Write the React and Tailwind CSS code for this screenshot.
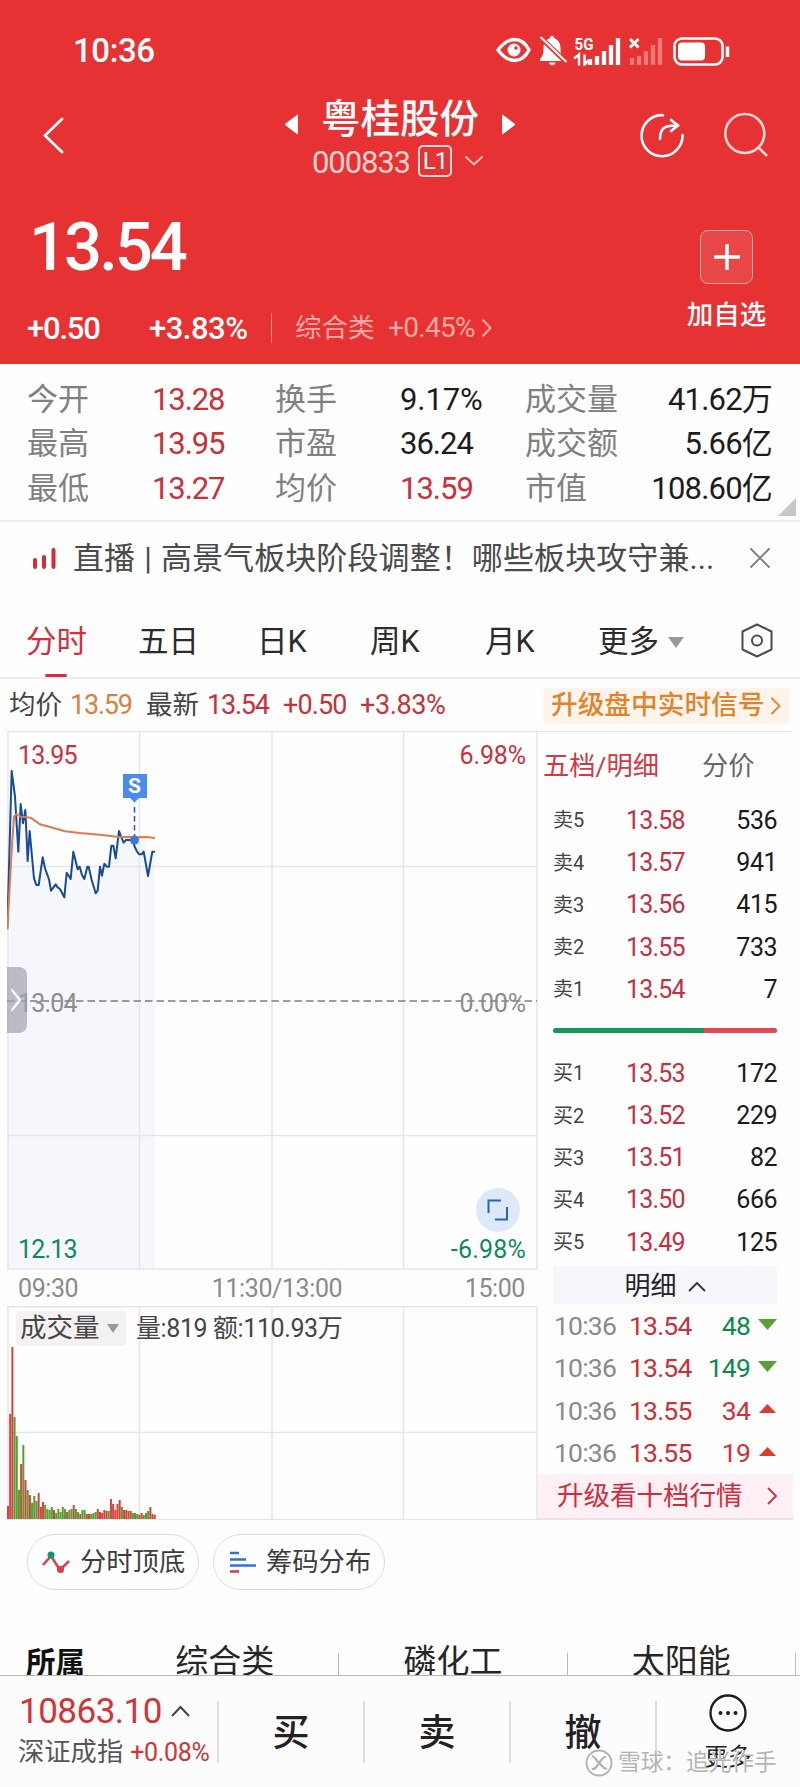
import React from 'react';

// 五档盘口
const sells = [
  { label: '卖5', price: '13.58', count: 536 },
  { label: '卖4', price: '13.57', count: 941 },
  { label: '卖3', price: '13.56', count: 415 },
  { label: '卖2', price: '13.55', count: 733 },
  { label: '卖1', price: '13.54', count: 7 },
];

const buys = [
  { label: '买1', price: '13.53', count: 172 },
  { label: '买2', price: '13.52', count: 229 },
  { label: '买3', price: '13.51', count: 82 },
  { label: '买4', price: '13.50', count: 666 },
  { label: '买5', price: '13.49', count: 125 },
];

const ticks = [
  { time: '10:36', price: '13.54', count: 48, up: false },
  { time: '10:36', price: '13.54', count: 149, up: false },
  { time: '10:36', price: '13.55', count: 34, up: true },
  { time: '10:36', price: '13.55', count: 19, up: true },
];

const stats = [
  ['今开', '13.28', '换手', '9.17%', '成交量', '41.62万'],
  ['最高', '13.95', '市盈', '36.24', '成交额', '5.66亿'],
  ['最低', '13.27', '均价', '13.59', '市值', '108.60亿'],
];

// 分时价格线、均价线
const pricePoints =
  '22,775 35,303 45,380 55,545 62,402 69,460 76,420 83,573 89,483 102,625 109,645 116,645 128,562 135,595 147,628 153,662 167,643 173,652 180,657 193,682 200,608 212,627 220,545 233,598 239,590 246,615 253,627 262,590 266,590 275,630 287,670 293,662 300,590 306,617 313,581 320,590 327,590 334,527 340,527 347,565 357,483 363,500 371,518 378,510 385,510 398,510 404,530 411,545 418,553 425,553 431,545 444,618 457,545 465,545';
const avgPoints =
  '22,778 35,540 42,440 50,432 62,440 92,443 120,463 150,471 195,484 240,489 300,494 350,500 400,502 440,501 465,504';

// 成交量柱: r 涨, g 跌
const volumes =
  'r13 r105 r172 g102 g83 g29 r55 g74 r39 g29 r24 g16 g23 g18 r26 r12 r17 g14 g10 g9 g12 r9 g6 g10 g7 g12 g10 r7 g9 g10 r14 g10 g7 r5 g9 g9 r5 r5 g5 g6 g7 r10 r7 r6 r9 r8 g8 r20 r15 r9 r15 r19 g12 r9 r9 r8 r8 g6 g6 g5 r4 r6 g4 g6 g8 r12 r5 r4'.split(' ');

const StatusBar = () => (
  <div className="flex h-[100px] items-center pl-[73px] pr-[68px]">
    <span className="flex-1 pt-px text-[33px] font-medium tracking-[-0.4px]">10:36</span>
    <svg width="236" height="32" viewBox="0 0 236 32" fill="none">
      <path d="M2 16C8 8 13 5.500 18.500 5.500S29 8 33 16C29 24 24 26.500 18.500 26.500S8 24 2 16Z" stroke="white" strokeWidth="3.400" />
      <circle cx="18" cy="16" r="6.500" fill="white" />
      <circle cx="20" cy="14" r="1.800" fill="#e63232" />
      <path d="M44 27v-2c3-3 3.500-6 3.500-11 0-5 2.500-8.500 6.500-10 0-3 4-3 4 0 4 1.500 6.500 5 6.500 10 0 5 .5 8 4 11v2ZM53 28.500h6.500c-1 3.500-5.500 3.500-6.500 0Z" fill="white" />
      <path d="m43 2 28 27" stroke="#e63232" strokeWidth="5" />
      <path d="m44.500 3 26 25" stroke="white" strokeWidth="2" />
      <text x="78.500" y="15.500" fill="white" fontSize="17" fontWeight="700" fontFamily="Roboto" textLength="19" lengthAdjust="spacingAndGlyphs">5G</text>
      <path d="M78 24.500l5-4v11M88.500 20.500v10l4-4" stroke="white" strokeWidth="2.500" />
      <path d="M94 31v-6M101 31v-9M108 31v-14M115 31V11M122 31V4" stroke="white" strokeWidth="4.300" />
      <path d="m134 5 8.500 8.500m0-8.500-8.500 8.500" stroke="white" strokeWidth="3" />
      <path d="M136 31v-7M143 31v-9M150 31v-14M157 31V11M164 31V4" stroke="white" strokeOpacity=".35" strokeWidth="4.300" />
      <rect x="178.500" y="4.500" width="48" height="26" rx="7.500" stroke="white" strokeWidth="2.600" />
      <rect x="182" y="8.500" width="27" height="18" rx="4" fill="white" />
      <path d="M231.500 12.500v10.500" stroke="white" strokeWidth="3.500" />
    </svg>
  </div>
);

const TitleBar = () => (
  <div className="flex h-[94px] pl-[43px] pr-[32px]">
    <svg className="mt-[17px]" width="22" height="37" viewBox="0 0 22 37" fill="none">
      <path d="M19 2 2 18.500 19 35" stroke="white" strokeWidth="2.800" strokeLinecap="round" />
    </svg>
    <div className="ml-[219px] w-[232px]">
      <div className="flex h-[42px] items-center justify-between pt-[3px]">
        <svg className="mt-[4px]" width="15" height="21" viewBox="0 0 15 21"><path d="M13.500 1v19L1 10.500Z" fill="white" stroke="white" strokeLinejoin="round" /></svg>
        <span className="-mt-[5px] text-[39.500px] font-medium">粤桂股份</span>
        <svg className="mt-[4px]" width="15" height="21" viewBox="0 0 15 21"><path d="M1.500 1v19L14 10.500Z" fill="white" stroke="white" strokeLinejoin="round" /></svg>
      </div>
      <div className="mt-[3px] flex h-[32px] items-center pl-[28px]">
        <span className="w-[106px] pt-[3px] text-[31px] tracking-[-1.1px] text-[#ffd3d0]">000833</span>
        <span className="flex h-[32px] w-[34px] items-center justify-center rounded-[5px] border-2 border-[#ffdcda] text-[24px] tracking-[-1px]">L1</span>
        <svg className="ml-[12px]" width="20" height="12" viewBox="0 0 20 12" fill="none">
          <path d="m1.500 1.500 8.500 8 8.500-8" stroke="#ffc4c0" strokeWidth="2" />
        </svg>
      </div>
    </div>
    <svg className="ml-[124px] mt-[13px]" width="44" height="45" viewBox="0 0 44 45" fill="none" stroke="white" strokeWidth="2.600" strokeLinecap="round">
      <path d="M23 2.200A20.500 20.500 0 1 0 42.500 22" />
      <path d="M20 26c0-10 4-13.500 15-13.500M31 7l7 5.500-7 5.500" />
    </svg>
    <svg className="ml-[40px] mt-[12px]" width="44" height="46" viewBox="0 0 44 46" fill="none" stroke="#ffd8d6" strokeWidth="2.600">
      <circle cx="20.800" cy="21.500" r="19.500" />
      <path d="m35 36 8 8" />
    </svg>
  </div>
);

const Quote = () => (
  <div className="flex h-[170px]">
    <div className="w-[640px] pl-[27px]">
      <div className="flex h-[104px] items-center pl-[2px] pt-[3px] text-[67px] font-medium tracking-[-3px]">13.54</div>
      <div className="flex h-[60px] items-center text-[31px]">
        <span className="w-[122px] pt-px font-medium tracking-[-1.2px]">+0.50</span>
        <span className="w-[122px] pt-px font-medium tracking-[-0.5px]">+3.83%</span>
        <span className="h-[30px] w-px bg-[#ff9a97]" />
        <span className="ml-[23px] w-[93px] text-[26.500px] text-[#ffaaa6]">综合类</span>
        <span className="w-[93px] text-[28px] tracking-[-0.7px] text-[#ffaaa6]">+0.45%</span>
        <svg width="11" height="20" viewBox="0 0 11 20" fill="none"><path d="m1.500 1.500 8 8.500-8 8.500" stroke="#ffaaa6" strokeWidth="2" /></svg>
      </div>
    </div>
    <div className="flex flex-1 flex-col items-center pl-[13px] pt-[36px]">
      <div className="flex h-[54px] w-[53px] shrink-0 items-center justify-center rounded-[8px] border border-[#ffa3a1] bg-white/10">
        <svg width="28" height="28" viewBox="0 0 28 28"><path d="M14 1v26M1 14h26" stroke="white" strokeWidth="3.500" /></svg>
      </div>
      <span className="mt-[18px] text-[26.500px] font-medium">加自选</span>
    </div>
  </div>
);

const Stats = () => (
  <div className="relative h-[158px] border-b-2 border-[#ececee] pl-[27px] pr-[28px] pt-[13px] text-[31px]">
    {stats.map((row, i) => (
      <div key={i} className="flex h-[44.500px] items-center">
        <span className="w-[125px] text-[31px] text-[#808080]">{row[0]}</span>
        <span className="w-[123px] tracking-[-1.1px] text-[#c9303a]">{row[1]}</span>
        <span className="w-[125px] text-[31px] text-[#808080]">{row[2]}</span>
        <span className={`w-[125px] ${i === 0 ? 'tracking-[-0.1px]' : 'tracking-[-1px]'} ${i === 2 ? 'text-[#c9303a]' : 'text-[#1c1c1c]'}`}>{row[3]}</span>
        <span className="text-[31px] text-[#808080]">{row[4]}</span>
        <span className="flex-1 text-right tracking-[-0.8px] text-[#1c1c1c]">{row[5]}</span>
      </div>
    ))}
    <svg className="absolute bottom-[4px] right-[4px]" width="18" height="18" viewBox="0 0 18 18"><path d="M18 0v18H0Z" fill="#c8c8c8" /></svg>
  </div>
);

const News = () => (
  <div className="flex h-[72px] items-center pl-[33px] pr-[29px]">
    <svg width="24" height="22" viewBox="0 0 24 22"><path d="M2 13v7M11 10v10M20.500 3v17" stroke="#cf2d3c" strokeWidth="4" strokeLinecap="round" /></svg>
    <span className="ml-[16px] flex-1 whitespace-nowrap pt-px text-[31px] tracking-[0.1px] text-[#4a4a4a]">
      直播<span className="px-[9px]">|</span>高景气板块阶段调整！哪些板块攻守兼...
    </span>
    <svg width="22" height="22" viewBox="0 0 22 22"><path d="m1.500 1.500 19 19m0-19-19 19" stroke="#7b7b7b" strokeWidth="1.800" /></svg>
  </div>
);

const Tabs = () => (
  <div className="relative flex h-[85px] items-center border-b-2 border-[#ececee] pl-[26px] pt-[13px] text-[30.500px] text-[#2b2b2b]">
    <span className="w-[112px] pt-px text-[#d42f3f]">分时</span>
    <span className="w-[119px] pt-px">五日</span>
    <span className="w-[113px] pt-px">日K</span>
    <span className="w-[115px] pt-px">周K</span>
    <span className="w-[113px] pt-px">月K</span>
    <span className="w-[70px] pt-px">更多</span>
    <svg width="16" height="11" viewBox="0 0 16 11"><path d="M0 0h16L8 11Z" fill="#999" /></svg>
    <svg className="-mt-[3px] ml-[57px]" width="32" height="35" viewBox="0 0 32 35" fill="none" stroke="#4b4b4b" strokeWidth="2">
      <path d="m16 1.500 14.500 7v18L16 33.500 1.500 26.500v-18Z" strokeLinejoin="round" />
      <circle cx="16" cy="17.500" r="5" />
    </svg>
    <span className="absolute bottom-0 left-[45px] h-[3px] w-[22px] rounded bg-[#d1303f]" />
  </div>
);

const InfoRow = () => (
  <div className="flex h-[52px] items-center pl-[9px] pt-px text-[27px] text-[#444]">
    <span className="w-[61px] text-[26.500px]">均价</span>
    <span className="w-[76px] tracking-[-1.2px] text-[#d9803f]">13.59</span>
    <span className="w-[61px] text-[26.500px]">最新</span>
    <span className="w-[76px] tracking-[-1.2px] text-[#c9303a]">13.54</span>
    <span className="w-[77px] tracking-[-0.9px] text-[#c9303a]">+0.50</span>
    <span className="w-[183px] tracking-[-0.4px] text-[#c9303a]">+3.83%</span>
    <span className="flex h-[36px] w-[247px] items-center justify-between rounded bg-[#fff4eb] pl-[8px] pr-[9px] text-[26.700px] font-medium text-[#e0842c]">
      升级盘中实时信号
      <svg width="11" height="18" viewBox="0 0 11 18" fill="none"><path d="m1.500 1 8 8-8 8" stroke="#e0842c" strokeWidth="1.800" /></svg>
    </span>
  </div>
);

const PriceChart = () => (
  <div className="relative h-[539px] text-[25px] tracking-[-0.8px]">
    <svg width="531" height="539" viewBox="0 0 531 539" fill="none">
      <path d="M1 78V538H148V122L139 118V110L113 100L107 126L92 137L87 162L73 142L66 122L57 165L35 140L28 150L15 100Z" fill="#f6f6fd" />
      <path d="M1 538V0M132.500 0v538M265 0v538M396.500 0v538M530 0v538M0 .500h530M0 135.500h530M0 404.500h530M0 538h530" stroke="#e6e6e9" strokeWidth="1.500" />
      <path d="M0 270h530" stroke="#7d7d7d" strokeWidth="1.500" strokeDasharray="7.500 4" />
      <g transform="translate(-7 -61) scale(.33333)" strokeWidth="6" strokeLinejoin="round">
        <polyline points={pricePoints} stroke="#174a97" />
        <polyline points={avgPoints} stroke="#dc7b50" />
      </g>
      <path d="M127.500 76v30" stroke="#34568c" strokeWidth="1.500" strokeDasharray="5.500 3.500" />
      <circle cx="127.500" cy="109" r="4.500" fill="#3d77d8" />
      <path d="M116 43h24v24h-8l-4.500 4.500L123 67h-7Z" fill="#4a8bee" />
    </svg>
    <span className="absolute left-[121px] top-[45px] text-[21px] font-bold tracking-normal text-white">S</span>
    <span className="absolute left-[11px] top-[12px] text-[#c9303f]">13.95</span>
    <span className="absolute right-[11px] top-[12px] tracking-[-0.1px] text-[#c9303f]">6.98%</span>
    <span className="absolute left-[11px] top-[260px] text-[#8c8c8c]">13.04</span>
    <span className="absolute right-[11px] top-[260px] tracking-[-0.1px] text-[#8c8c8c]">0.00%</span>
    <span className="absolute left-[11px] top-[506px] text-[#0c8a58]">12.13</span>
    <span className="absolute right-[11px] top-[506px] tracking-[0.2px] text-[#0c8a58]">-6.98%</span>
    <span className="absolute left-0 top-[236px] flex h-[66px] w-[20px] items-center rounded-r-[8px] bg-[#a3a3ad]/70">
      <svg className="ml-[3px]" width="12" height="24" viewBox="0 0 12 24" fill="none"><path d="m1.500 1.500 8.500 10.500-8.500 10.500" stroke="white" strokeWidth="2.200" /></svg>
    </span>
    <span className="absolute left-[469px] top-[457px] flex size-[44px] items-center justify-center rounded-full bg-[#dde8fb]">
      <svg width="22" height="22" viewBox="0 0 22 22" fill="none"><path d="M1.500 14V1.500H14M20 8v12.500H8" stroke="#2c63b8" strokeWidth="2" /></svg>
    </span>
  </div>
);

const VolumeChart = () => (
  <div className="relative h-[214px] text-[#444]">
    <svg width="531" height="214" viewBox="0 0 531 214" fill="none">
      <path d="M0 .8h530M1 0v213M132.500 0v213M265 0v213M396.500 0v213M530 0v213M0 126.500h530M0 213.500h530" stroke="#e6e6e9" strokeWidth="1.500" />
      {volumes.map((v, i) => {
        const h = Number(v.slice(1));
        return <rect key={i} x={i * 2.19} y={213 - h} width="2" height={h} fill={v[0] === 'r' ? '#d8403a' : '#4fa02e'} />;
      })}
    </svg>
    <div className="absolute left-[9px] top-[5px] flex h-[35px] items-center">
      <span className="flex h-[35px] w-[110px] items-center rounded bg-[#f3f1f2] pl-[4px] text-[26.500px]">
        成交量
        <svg className="ml-[7px]" width="12" height="9" viewBox="0 0 12 9"><path d="M0 0h12L6 9Z" fill="#999" /></svg>
      </span>
      <span className="ml-[10px] whitespace-nowrap text-[25px] tracking-[-0.4px]">量:819 额:110.93万</span>
    </div>
  </div>
);

const LevelRow = ({ item }) => (
  <div className="flex h-[42.200px] items-center text-[25px]">
    <span className="w-[73px] text-[20px] text-[#444]">{item.label}</span>
    <span className="tracking-[-0.8px] text-[#c4303f]">{item.price}</span>
    <span className="flex-1 text-right tracking-[-0.5px] text-[#1a1a1a]">{item.count}</span>
  </div>
);

const OrderBook = () => (
  <div className="flex w-[256px] flex-col border-t border-[#e6e6e9]">
    <div className="flex h-[68px] items-center pl-[6px] text-[26.300px]">
      <span className="w-[159px] text-[#cf3a44]">五档/明细</span>
      <span className="text-[#666]">分价</span>
    </div>
    <div className="pl-[16px] pr-[16px]">
      {sells.map((item) => <LevelRow key={item.label} item={item} />)}
      <div className="flex h-[42px] items-center pb-[2px]">
        <span className="h-[5px] w-[151px] rounded-l bg-[#0f9a58]" />
        <span className="h-[5px] flex-1 rounded-r bg-[#e04a50]" />
      </div>
      {buys.map((item) => <LevelRow key={item.label} item={item} />)}
      <div className="mt-[3px] flex h-[38px] items-center justify-center gap-[11px] bg-[#f6f6fd] pt-[2px] text-[26px] text-[#222]">
        明细
        <svg width="18" height="11" viewBox="0 0 18 11" fill="none"><path d="m1 10 8-8 8 8" stroke="#333" strokeWidth="1.800" /></svg>
      </div>
    </div>
    <div className="pl-[17px] pr-[16px] pt-px">
      {ticks.map((t, i) => (
        <div key={i} className="flex h-[42.300px] items-center text-[26.500px] tracking-[-0.8px]">
          <span className="w-[75px] text-[#8a8a8a]">{t.time}</span>
          <span className="text-[#c9303a]">{t.price}</span>
          <span className={`flex-1 text-right ${t.up ? 'text-[#d0323c]' : 'text-[#0c8a4c]'}`}>{t.count}</span>
          <svg className="-mt-[4px] ml-[8px]" width="19" height="11" viewBox="0 0 19 11">
            <path d={t.up ? 'M1 10h17L9.500 1Z' : 'M0 0h19L9.500 11Z'} fill={t.up ? '#e03a30' : '#5a9f35'} />
          </svg>
        </div>
      ))}
    </div>
    <div className="mt-auto flex h-[46px] items-center justify-between border-b-2 border-[#f0dfe4] bg-[#fef0f4] pl-[20px] pr-[16px] text-[26.500px] text-[#cf2d3c]">
      升级看十档行情
      <svg width="10" height="18" viewBox="0 0 10 18" fill="none"><path d="m1 1 8 8-8 8" stroke="#cf2d3c" strokeWidth="1.800" /></svg>
    </div>
  </div>
);

const Chips = () => (
  <div className="flex h-[84px] gap-[14px] pl-[27px] pt-[14px] text-[26.300px] text-[#3c3c3c]">
    <div className="flex h-[56px] w-[172px] items-center rounded-full border border-[#e0dcdd] pl-[14px]">
      <svg width="28" height="24" viewBox="0 0 28 24" fill="none">
        <path d="m1 15 8-9 9 14 9-9" stroke="#d93c4a" strokeWidth="2.500" />
        <circle cx="9" cy="5" r="3.500" fill="#119a62" />
        <circle cx="18.500" cy="19.500" r="3.500" fill="#d93c4a" />
      </svg>
      <span className="ml-[10px]">分时顶底</span>
    </div>
    <div className="flex h-[56px] w-[172px] items-center rounded-full border border-[#e0dcdd] pl-[16px]">
      <svg width="26" height="22" viewBox="0 0 26 22" strokeWidth="2.600">
        <path d="M0 2h9M0 8.500h16M0 14.500h26" stroke="#3270d8" />
        <path d="M0 20.500h9" stroke="#d93c4a" />
      </svg>
      <span className="ml-[10px]">筹码分布</span>
    </div>
  </div>
);

const Sectors = () => (
  <div className="flex h-[71px] items-start overflow-hidden pt-[41px] text-[33px] text-[#262626]">
    <span className="w-[111px] pl-[26px] pt-[4px] text-[29.500px] font-bold text-[#111]">所属</span>
    {['综合类', '磷化工', '太阳能'].map((name) => (
      <span key={name} className="flex w-[228.300px] shrink-0 justify-between">
        <span className="flex-1 text-center">{name}</span>
        <span className="mt-[8px] h-[30px] w-px bg-[#bbb]" />
      </span>
    ))}
  </div>
);

const BottomBar = () => (
  <div className="relative flex h-[112px] items-start border-t border-[#b8b8b8] bg-[#fdfcfd] pt-[25px]">
    <div className="-mt-[11px] w-[217px] pl-[18px]">
      <div className="flex h-[42px] items-center pl-px text-[35px] tracking-[-0.5px] text-[#cf3438]">
        10863.10
        <svg className="ml-[9px]" width="19" height="12" viewBox="0 0 19 12" fill="none"><path d="m1 11 8.500-9 8.500 9" stroke="#444" strokeWidth="2" /></svg>
      </div>
      <div className="flex h-[40px] items-center whitespace-nowrap text-[26.300px] text-[#55555c]">
        深证成指
        <span className="ml-[7px] text-[25px] tracking-[-0.3px] text-[#cf3438]">+0.08%</span>
      </div>
    </div>
    {['买', '卖', '撤'].map((name) => (
      <div key={name} className="flex h-[62px] w-[146px] items-center justify-center border-l-2 border-[#dcdcde] pt-[2px] text-[37px] font-medium text-[#222]">{name}</div>
    ))}
    <div className="flex h-[62px] w-[144px] flex-col items-center border-l-2 border-[#dcdcde] text-[#222]">
      <svg className="-mt-[7px] shrink-0" width="38" height="38" viewBox="0 0 38 38" fill="none">
        <circle cx="19" cy="19" r="17.500" stroke="#1d1d1d" strokeWidth="2.300" />
        <path d="M11.500 19h.01M19 19h.01M26.500 19h.01" stroke="#1d1d1d" strokeWidth="4" strokeLinecap="round" />
      </svg>
      <span className="mt-[14px] text-[23.500px]">更多</span>
    </div>
    {/* 水印 */}
    <div className="absolute left-[585px] top-[72px] flex h-[30px] items-center whitespace-nowrap text-[22.700px] text-[#b4b4b6] [text-shadow:-1px_-1px_0_#fff]">
      <svg className="mr-[5px]" width="28" height="28" viewBox="0 0 28 28" fill="none">
        <circle cx="14" cy="14" r="12.500" fill="white" stroke="#b0b0b0" strokeWidth="1.800" />
        <path d="M7 7c4 1 4 5 7 7s4 6 8 6M21 8c-4 0-5 4-7 6s-3 7-7 6" stroke="#b0b0b0" strokeWidth="2.200" />
      </svg>
      雪球：追光作手
    </div>
  </div>
);

const App = () => {
  return (
    <div className="h-[1787px] w-[800px] overflow-hidden bg-[#fefefe] font-['Roboto','Noto_Sans_CJK_SC',sans-serif] leading-none">
      <header className="h-[364px] bg-[#e63232] text-white">
        <StatusBar />
        <TitleBar />
        <Quote />
      </header>
      <Stats />
      <News />
      <Tabs />
      <InfoRow />
      <div className="flex h-[789px] pl-[7px]">
        <div className="w-[530px]">
          <PriceChart />
          <div className="flex h-[36px] items-center justify-between pl-[11px] pr-[12px] pt-px text-[25px] tracking-[-0.4px] text-[#8a8a8a]">
            <span>09:30</span>
            <span className="pl-[11px]">11:30/13:00</span>
            <span>15:00</span>
          </div>
          <VolumeChart />
        </div>
        <OrderBook />
      </div>
      <Chips />
      <Sectors />
      <BottomBar />
    </div>
  );
};

export default App;
